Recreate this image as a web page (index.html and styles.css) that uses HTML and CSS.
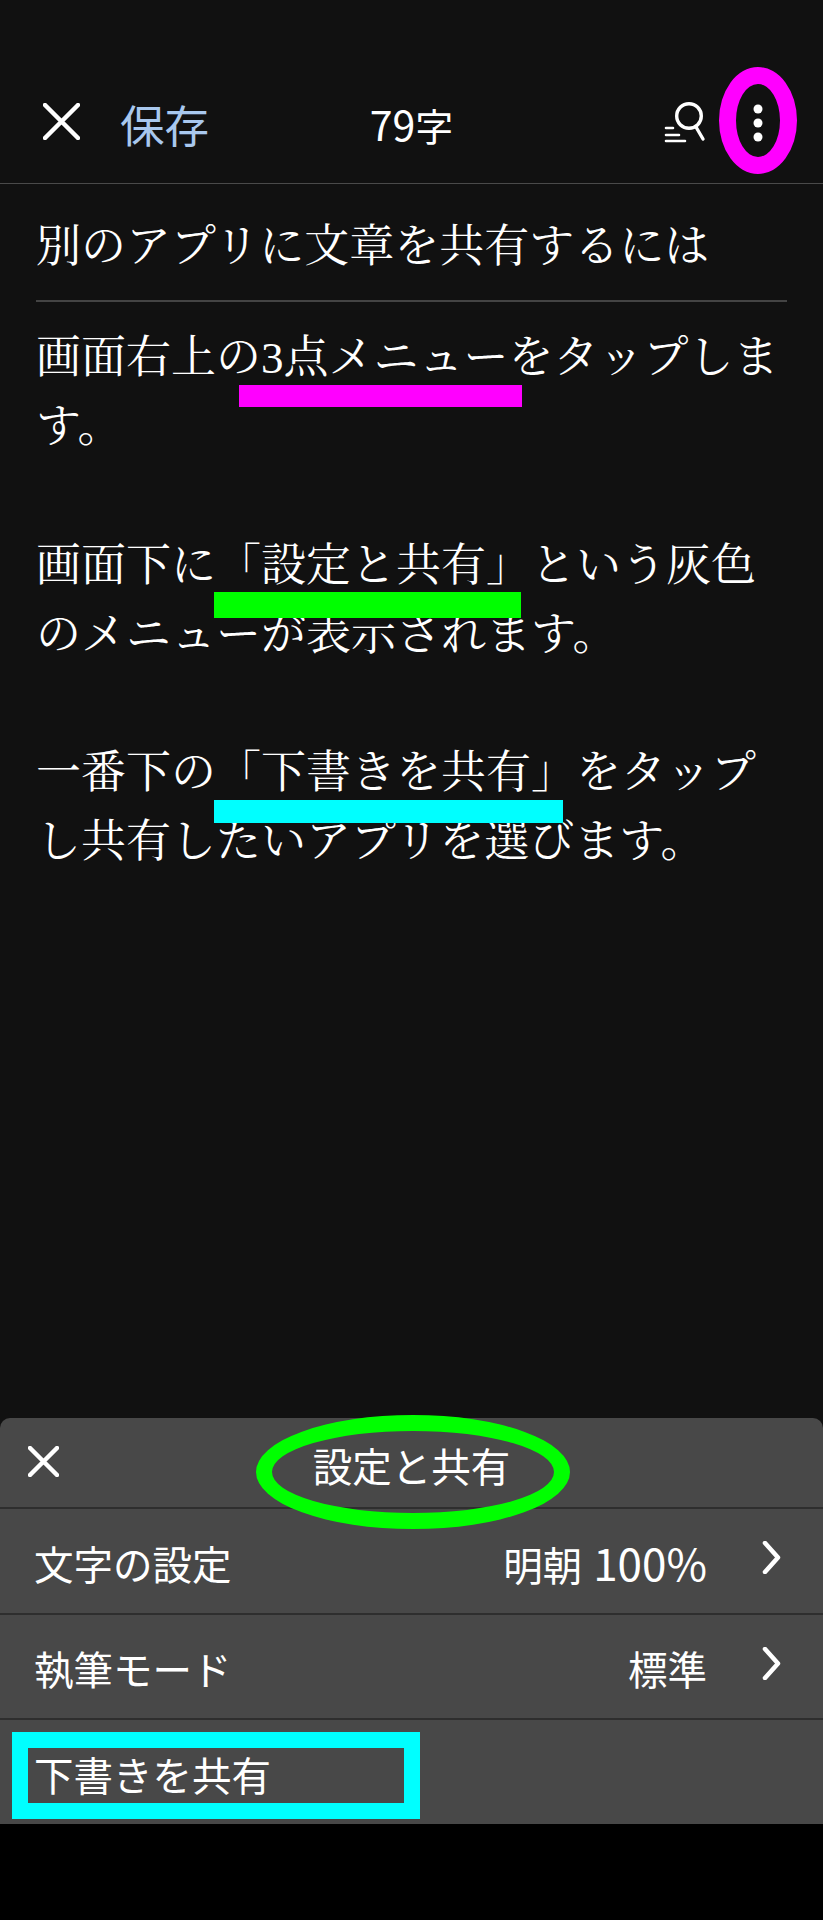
FILE: index.html
```html
<!DOCTYPE html>
<html lang="ja">
<head>
  <meta charset="UTF-8" />
  <title>設定と共有</title>
  <link rel="stylesheet" href="styles.css">
</head>
<body>
  <div class="screen">
    <header class="topbar">
      <div class="topbar-left">
        <svg class="close" viewBox="0 0 37 37"><path d="M2 2 L35 35 M35 2 L2 35"/></svg>
        <span class="save">保存</span>
      </div>
      <div class="count"><span class="latin">79</span>字</div>
      <div class="topbar-right">
        <svg class="search" viewBox="0 0 40 40">
          <circle cx="25" cy="14" r="12.3"/>
          <path d="M32 25 L39 37"/>
          <path class="thin" d="M2 26 H9 M2 33 H15 M2 39 H21"/>
        </svg>
        <svg class="dots" viewBox="0 0 10 38">
          <circle cx="5" cy="5" r="4.5"/>
          <circle cx="5" cy="19" r="4.5"/>
          <circle cx="5" cy="33" r="4.5"/>
        </svg>
      </div>
    </header>

    <main class="editor">
      <h1 class="title">別のアプリに文章を共有するには</h1>
      <div class="body-text">
        <p>画面右上の3点メニューをタップします。</p>
        <p>画面下に「設定と共有」という灰色のメニューが表示されます。</p>
        <p>一番下の「下書きを共有」をタップし共有したいアプリを選びます。</p>
      </div>
    </main>

    <section class="sheet">
      <div class="sheet-head">
        <svg class="sheet-close" viewBox="0 0 31 31"><path d="M2 2 L29 29 M29 2 L2 29"/></svg>
        <span>設定と共有</span>
      </div>
      <div class="row">
        <span>文字の設定</span>
        <span class="value">明朝 <span class="latin">100%</span></span>
        <svg class="chevron" viewBox="0 0 19 33"><path d="M3 2 L16 16.5 L3 31"/></svg>
      </div>
      <div class="row">
        <span>執筆モード</span>
        <span class="value">標準</span>
        <svg class="chevron" viewBox="0 0 19 33"><path d="M3 2 L16 16.5 L3 31"/></svg>
      </div>
      <div class="row">
        <span>下書きを共有</span>
      </div>
    </section>
    <div class="bottom-black"></div>

    <!-- annotations drawn on top of the screenshot -->
    <div class="mark ring-pink"></div>
    <div class="mark ring-green"></div>
    <div class="mark box-cyan"></div>
    <div class="mark bar-pink"></div>
    <div class="mark bar-green"></div>
    <div class="mark bar-cyan"></div>
  </div>
</body>
</html>
```

FILE: styles.css
```css
* {
  box-sizing: border-box;
}
body {
  margin: 0;
  background: #111;
  color: #fff;
  font-family: "Noto Sans CJK JP", sans-serif;
}
.screen {
  position: relative;
  width: 823px;
  height: 1920px;
  display: flex;
  flex-direction: column;
  overflow: hidden;
}

/* top bar */
.topbar {
  margin-top: 70px;
  height: 114px;
  flex: none;
  display: grid;
  grid-template-columns: 1fr auto 1fr;
  align-items: center;
  border-bottom: 1px solid #4a4a4a;
  padding: 0 43px;
}
.topbar-left {
  display: flex;
  align-items: center;
  gap: 40px;
}
.close {
  width: 37px;
  height: 37px;
  margin-top: -10px;
}
.close path,
.sheet-close path,
.chevron path {
  fill: none;
  stroke: #fff;
  stroke-width: 4.5;
  stroke-linecap: round;
  stroke-linejoin: round;
}
.save {
  margin-top: -4px;
  font-size: 44.5px;
  line-height: 1;
  color: #a9c8ee;
}
.count {
  margin-top: -7px;
  font-size: 38px;
  line-height: 1;
}
.count .latin {
  font-size: 41px;
}
.topbar-right {
  display: flex;
  justify-content: flex-end;
  align-items: center;
  gap: 49px;
  padding-right: 17px;
}
.search {
  width: 40px;
  height: 42px;
  margin-top: -10px;
  overflow: visible;
}
.search circle,
.search path {
  fill: none;
  stroke: #fff;
  stroke-width: 3.4;
  stroke-linecap: round;
}
.search .thin {
  stroke-width: 2.6;
}
.dots {
  width: 10px;
  height: 38px;
  margin-top: -7px;
  fill: #fff;
}

/* editor */
.editor {
  flex: 1;
  padding: 0 36px;
  font-family: "Liberation Serif", "Noto Serif CJK JP", "Noto Sans CJK JP", serif;
}
.title {
  margin: 0;
  height: 118px;
  padding-top: 28px;
  font-size: 45px;
  line-height: 70px;
  font-weight: 400;
  border-bottom: 2px solid #444;
}
.body-text {
  padding-top: 22px;
  font-size: 45px;
  line-height: 69px;
}
.body-text p {
  margin: 0 0 69.5px;
}

/* bottom sheet */
.sheet {
  flex: none;
  height: 406px;
  background: #484848;
  border-radius: 10px 10px 0 0;
  font-size: 39.5px;
  line-height: 1;
}
.sheet-head {
  position: relative;
  height: 89px;
  display: flex;
  align-items: center;
  justify-content: center;
  padding-top: 5px;
}
.sheet-close {
  position: absolute;
  left: 28px;
  top: 28px;
  width: 31px;
  height: 31px;
}
.row {
  height: 105.7px;
  display: flex;
  align-items: center;
  border-top: 2px solid #2e2e2e;
  padding: 3px 42px 0 34px;
}
.value {
  margin-left: auto;
}
.value .latin {
  margin-left: 2px;
  font-size: 44px;
}
.chevron {
  width: 19px;
  height: 33px;
  margin: -10px 0 0 55px;
}
.bottom-black {
  flex: none;
  height: 96px;
  background: #000;
}

/* annotations */
.mark {
  position: absolute;
}
.ring-pink {
  left: 719px;
  top: 67px;
  width: 78px;
  height: 107px;
  border: 17px solid #f0f;
  border-radius: 50%;
}
.ring-green {
  left: 256px;
  top: 1415px;
  width: 314px;
  height: 114px;
  border: 16px solid #0f0;
  border-radius: 50%;
}
.box-cyan {
  left: 12px;
  top: 1732px;
  width: 408px;
  height: 87px;
  border: 16px solid #0ff;
}
.bar-pink {
  left: 239px;
  top: 385px;
  width: 283px;
  height: 22px;
  background: #f0f;
}
.bar-green {
  left: 214px;
  top: 592px;
  width: 307px;
  height: 26px;
  background: #0f0;
}
.bar-cyan {
  left: 214px;
  top: 800px;
  width: 349px;
  height: 23px;
  background: #0ff;
}
```
